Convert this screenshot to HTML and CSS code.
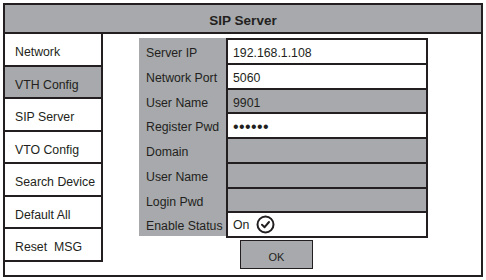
FILE: index.html
```html
<!DOCTYPE html>
<html>
<head>
<meta charset="utf-8">
<link rel="stylesheet" href="styles.css">
</head>
<body>
<div class="frame">
  <div class="title">SIP Server</div>
  <div class="body">
    <nav class="nav">
      <div class="nav-item">Network</div>
      <div class="nav-item active">VTH Config</div>
      <div class="nav-item">SIP Server</div>
      <div class="nav-item">VTO Config</div>
      <div class="nav-item">Search Device</div>
      <div class="nav-item">Default All</div>
      <div class="nav-item">Reset&nbsp; MSG</div>
    </nav>
    <main class="main">
      <div class="form">
        <div class="label">Server IP</div><div class="value">192.168.1.108</div>
        <div class="label">Network Port</div><div class="value">5060</div>
        <div class="label">User Name</div><div class="value gray">9901</div>
        <div class="label">Register Pwd</div><div class="value"><span class="dots">••••••</span></div>
        <div class="label">Domain</div><div class="value gray"></div>
        <div class="label">User Name</div><div class="value gray"></div>
        <div class="label">Login Pwd</div><div class="value gray"></div>
        <div class="label">Enable Status</div><div class="value last">On
          <svg class="check" width="19" height="19" viewBox="0 0 19 19"><circle cx="9.5" cy="9.5" r="8" fill="none" stroke="#231f20" stroke-width="2"/><path d="M6 9.8 L8.6 12.2 L13 7" fill="none" stroke="#231f20" stroke-width="2" stroke-linecap="round" stroke-linejoin="round"/></svg>
        </div>
      </div>
      <button class="ok">OK</button>
    </main>
  </div>
</div>
</body>
</html>
```
FILE: styles.css
```css
html, body {
  margin: 0;
  padding: 0;
  background: #ffffff;
}
body {
  font-family: "Liberation Sans", Arial, sans-serif;
  color: #231f20;
}
.frame {
  margin: 3px 0 0 3px;
  width: 480px;
  height: 274px;
  box-sizing: border-box;
  border: 2px solid #231f20;
  display: flex;
  flex-direction: column;
}
.title {
  box-sizing: border-box;
  border-bottom: 2px solid #231f20;
  background: #a7a9ac;
  font-weight: bold;
  font-size: 13.5px;
  text-align: center;
  padding-top: 9px;
  line-height: 14px;
  height: 29px;
}
.body {
  flex: 1;
  display: flex;
}
.nav {
  width: 98px;
  box-sizing: border-box;
  border-right: 2px solid #231f20;
  align-self: flex-start;
}
.nav-item {
  height: 32.5px;
  box-sizing: border-box;
  border-bottom: 2px solid #231f20;
  padding: 11px 0 0 10px;
  font-size: 12.3px;
  line-height: 14px;
  white-space: nowrap;
}
.nav-item.active {
  background: #a7a9ac;
}
.main {
  flex: 1;
  padding: 4px 0 0 36px;
}
.form {
  display: grid;
  grid-template-columns: 87px 202px;
  grid-auto-rows: 24.75px;
  background: #a7a9ac;
  width: 289px;
}
.label {
  font-size: 12.3px;
  line-height: 14px;
  padding: 8px 0 0 7px;
  white-space: nowrap;
}
.value {
  box-sizing: border-box;
  border: 2px solid #231f20;
  border-bottom: none;
  background: #ffffff;
  font-size: 12.3px;
  line-height: 14px;
  padding: 6px 0 0 5px;
  display: flex;
  align-items: flex-start;
}
.value.gray {
  background: #a7a9ac;
}
.value.last {
  border-bottom: 2px solid #231f20;
  height: 26.75px;
  align-items: center;
  padding-top: 0;
}
.dots {
  font-size: 16px;
  letter-spacing: 0.4px;
  line-height: 14px;
}
.check {
  margin-left: 7px;
  display: block;
}
.ok {
  display: block;
  margin: 4px 0 0 101px;
  width: 73px;
  height: 29px;
  box-sizing: border-box;
  border: 1.3px solid #231f20;
  background: #a7a9ac;
  font-family: "Liberation Sans", Arial, sans-serif;
  font-size: 11px;
  color: #231f20;
  padding: 4px 0 0 0;
}
```
